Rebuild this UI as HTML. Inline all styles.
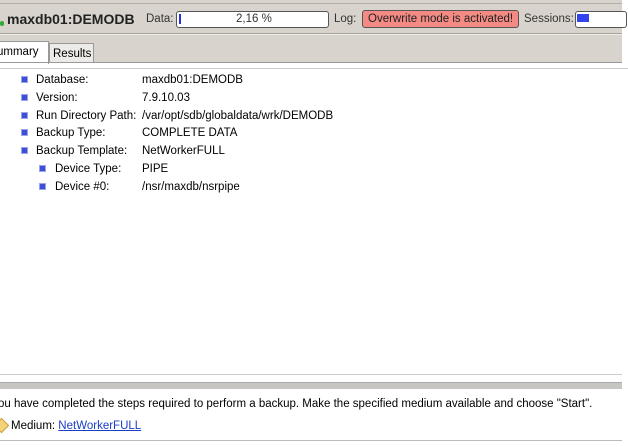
<!DOCTYPE html>
<html><head><meta charset="utf-8"><style>
body{margin:0;width:628px;height:447px;background:#fff;position:relative;overflow:hidden;font-family:"Liberation Sans",Arial,sans-serif;font-size:11.5px;color:#000}
.a{position:absolute}
.row{position:absolute;white-space:nowrap;font-size:11.5px}
.b{position:absolute;width:5px;height:5px;background:#3c4fd6;border:1px solid #9aa4e6}
</style></head><body>
<div class="a" style="left:0;top:0;width:622px;height:62px;background:#d8d4cd"></div>
<div class="a" style="left:0;top:3px;width:622px;height:1px;background:#b4b0a8"></div>
<div class="a" style="left:0;top:33px;width:622px;height:1px;background:#a8a49c"></div>
<div class="a" style="left:0;top:34px;width:622px;height:1px;background:#f0eee9"></div>
<div class="a" style="left:0;top:21px;width:4px;height:5px;background:#3a3;border-radius:2px"></div>
<div class="row" style="left:7px;top:11px;font-size:14px;font-weight:bold;color:#222">maxdb01:DEMODB</div>
<div class="row" style="left:146px;top:13px;color:#333">Data:</div>
<div class="a" style="left:176px;top:11px;width:151px;height:15px;background:#fff;border:1px solid #555;border-radius:3px"></div>
<div class="a" style="left:179px;top:14px;width:2px;height:10px;background:#2233dd"></div>
<div class="row" style="left:236px;top:13px;color:#333">2,16 %</div>
<div class="row" style="left:334px;top:13px;color:#333">Log:</div>
<div class="a" style="left:362px;top:10px;width:155px;height:16px;background:#f48a84;border:1px solid #555;border-radius:3px"></div>
<div class="row" style="left:368px;top:13px;color:#222">Overwrite mode is activated!</div>
<div class="row" style="left:524px;top:13px;color:#333">Sessions:</div>
<div class="a" style="left:575px;top:11px;width:50px;height:15px;background:#fff;border:1px solid #555;border-radius:3px"></div>
<div class="a" style="left:577px;top:14px;width:12px;height:8px;background:#3344ee"></div>
<div class="a" style="left:0;top:41px;width:48px;height:22px;background:#fff;border-right:1px solid #999;border-top:1px solid #999"></div>
<div class="row" style="left:-3px;top:46px">ummary</div>
<div class="a" style="left:49px;top:43px;width:43px;height:19px;background:#ecebe7;border:1px solid #999;border-bottom:none"></div>
<div class="row" style="left:53px;top:48px">Results</div>
<div class="a" style="left:0;top:62px;width:622px;height:1px;background:#999"></div>
<div class="a" style="left:0;top:68px;width:628px;height:1px;background:#ccc"></div>

<div class="b" style="left:21px;top:76px"></div><div class="row" style="left:36px;top:74px">Database:</div><div class="row" style="left:142px;top:74px">maxdb01:DEMODB</div>
<div class="b" style="left:21px;top:94px"></div><div class="row" style="left:36px;top:92px">Version:</div><div class="row" style="left:142px;top:92px">7.9.10.03</div>
<div class="b" style="left:21px;top:112px"></div><div class="row" style="left:36px;top:110px">Run Directory Path:</div><div class="row" style="left:142px;top:110px">/var/opt/sdb/globaldata/wrk/DEMODB</div>
<div class="b" style="left:21px;top:129px"></div><div class="row" style="left:36px;top:127px">Backup Type:</div><div class="row" style="left:142px;top:127px">COMPLETE DATA</div>
<div class="b" style="left:21px;top:147px"></div><div class="row" style="left:36px;top:145px">Backup Template:</div><div class="row" style="left:142px;top:145px">NetWorkerFULL</div>
<div class="b" style="left:39px;top:165px"></div><div class="row" style="left:55px;top:163px">Device Type:</div><div class="row" style="left:142px;top:163px">PIPE</div>
<div class="b" style="left:39px;top:183px"></div><div class="row" style="left:55px;top:181px">Device #0:</div><div class="row" style="left:142px;top:181px">/nsr/maxdb/nsrpipe</div>

<div class="a" style="left:0;top:374px;width:622px;height:1px;background:#ccc"></div>
<div class="a" style="left:0;top:382px;width:622px;height:6px;background:#c8c6c2;border-top:1px solid #aaa"></div>
<div class="row" style="left:-2px;top:398px">ou have completed the steps required to perform a backup. Make the specified medium available and choose "Start".</div>
<div class="a" style="left:-4px;top:420px;width:9px;height:9px;background:#f4d27a;border:1px solid #c9a040;transform:rotate(45deg)"></div>
<div class="row" style="left:11px;top:420px">Medium: <span style="color:#1a3ec8;text-decoration:underline">NetWorkerFULL</span></div>
<div class="a" style="left:0;top:440px;width:622px;height:1px;background:#bbb"></div>
</body></html>
